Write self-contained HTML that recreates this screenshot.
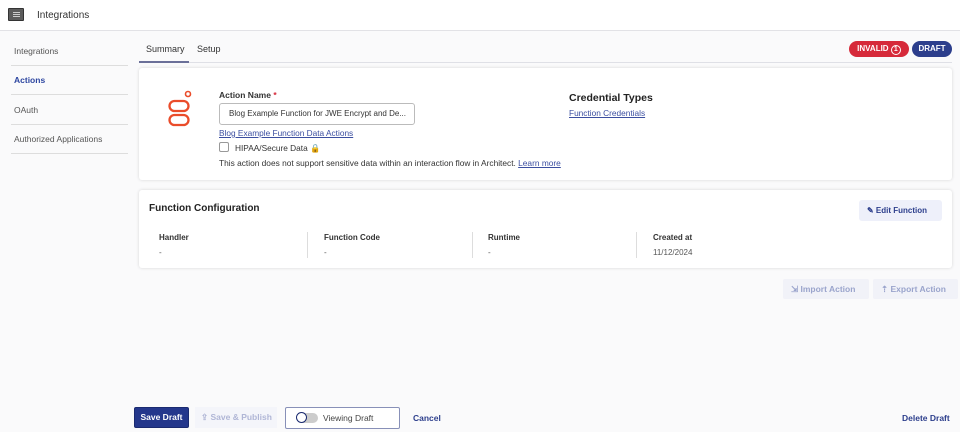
<!DOCTYPE html>
<html><head><style>
*{box-sizing:border-box;margin:0;padding:0}
body{width:960px;height:432px;overflow:hidden;background:#fafafb;font-family:"Liberation Sans",sans-serif;color:#222;position:relative;font-size:9px}
.abs{position:absolute}
.top{left:0;top:0;width:960px;height:31px;background:#fff;border-bottom:1px solid #e2e2e6}
.menu{left:8px;top:8px;width:16px;height:13px;background:#5c5c5c;border:1px solid #333;border-radius:1px}
.menu i{position:absolute;left:4px;width:7px;height:1px;background:#ccc}
.side{left:0;top:31px;width:131px;height:401px;background:#fafafb}
.si{position:absolute;left:14px;font-size:8.5px;color:#555}
.sep{position:absolute;left:11px;width:117px;height:1px;background:#ddd}
.card{background:#fff;border-radius:3px;box-shadow:0 0 3px rgba(0,0,0,.15)}
a{color:#3b4ea0;text-decoration:underline}
.pill{border-radius:8px;height:16px;color:#fff;font-weight:bold;font-size:8px;line-height:16px;text-align:center}
.lbl{font-weight:bold;font-size:8.5px;color:#333}
.val{font-size:8px;color:#555}
.vl{width:1px;height:26px;background:#ddd}
.btn{height:20px;background:#f1f2f8;border-radius:2px;color:#9aa4cc;font-weight:bold;font-size:8.5px;line-height:20px}
</style></head><body>
<div class="abs top"></div>
<div class="abs menu"><i style="top:3px"></i><i style="top:5px"></i><i style="top:7px"></i></div>
<div class="abs" style="left:37px;top:10px;font-size:10px;color:#333">Integrations</div>
<div class="abs side">
<div class="si" style="top:15px">Integrations</div><div class="sep" style="top:34px"></div>
<div class="si" style="top:44px;color:#2c45a0;font-weight:bold">Actions</div><div class="sep" style="top:63px"></div>
<div class="si" style="top:74px">OAuth</div><div class="sep" style="top:93px"></div>
<div class="si" style="top:103px">Authorized Applications</div><div class="sep" style="top:122px"></div>
</div>
<div class="abs" style="left:139px;top:62px;width:813px;height:1px;background:#dfe0e6"></div>
<div class="abs" style="left:139px;top:61px;width:50px;height:2px;background:#6b7099"></div>
<div class="abs" style="left:146px;top:44px;font-size:9px;color:#333">Summary</div>
<div class="abs" style="left:197px;top:44px;font-size:9px;color:#333">Setup</div>
<div class="abs pill" style="left:849px;top:41px;width:60px;background:#d62a3a">INVALID <span style="display:inline-block;width:10px;height:10px;border:1px solid #fff;border-radius:50%;line-height:8px;font-size:7px">1</span></div>
<div class="abs pill" style="left:912px;top:41px;width:40px;background:#2c3e8c">DRAFT</div>

<div class="abs card" style="left:139px;top:68px;width:813px;height:112px"></div>
<svg class="abs" style="left:166px;top:88px" width="30" height="42" viewBox="0 0 30 42">
<rect x="3.5" y="13" width="19" height="10" rx="5" fill="none" stroke="#ea4c2a" stroke-width="2.3"/>
<rect x="3.5" y="27" width="19" height="10" rx="5" fill="none" stroke="#ea4c2a" stroke-width="2.3"/>
<circle cx="22" cy="6" r="2.5" fill="none" stroke="#ea4c2a" stroke-width="1.6"/>
</svg>
<div class="abs lbl" style="left:219px;top:90px">Action Name <span style="color:#d62a3a">*</span></div>
<div class="abs" style="left:219px;top:103px;width:196px;height:22px;border:1px solid #bbb;border-radius:3px;font-size:8px;line-height:20px;padding-left:9px;color:#333">Blog Example Function for JWE Encrypt and De...</div>
<div class="abs" style="left:219px;top:128px;font-size:8.3px"><a>Blog Example Function Data Actions</a></div>
<div class="abs" style="left:219px;top:142px;width:10px;height:10px;border:1px solid #999;border-radius:2px"></div>
<div class="abs" style="left:235px;top:143px;font-size:8.3px;color:#333">HIPAA/Secure Data <span style="color:#9a7a2a">🔒</span></div>
<div class="abs" style="left:219px;top:158px;font-size:8.35px;color:#333">This action does not support sensitive data within an interaction flow in Architect. <a>Learn more</a></div>
<div class="abs" style="left:569px;top:92px;font-weight:bold;font-size:10.5px;color:#222">Credential Types</div>
<div class="abs" style="left:569px;top:108px;font-size:8.3px"><a>Function Credentials</a></div>

<div class="abs card" style="left:139px;top:190px;width:813px;height:78px"></div>
<div class="abs" style="left:149px;top:203px;font-weight:bold;font-size:10px;color:#222">Function Configuration</div>
<div class="abs" style="left:859px;top:200px;width:83px;height:21px;background:#eef0fa;border-radius:3px;color:#2c3e8c;font-weight:bold;font-size:8px;line-height:21px;padding-left:8px">✎ Edit Function</div>
<div class="abs lbl" style="left:159px;top:233px;font-size:8px">Handler</div><div class="abs val" style="left:159px;top:248px">-</div>
<div class="abs vl" style="left:307px;top:232px"></div>
<div class="abs lbl" style="left:324px;top:233px;font-size:8px">Function Code</div><div class="abs val" style="left:324px;top:248px">-</div>
<div class="abs vl" style="left:472px;top:232px"></div>
<div class="abs lbl" style="left:488px;top:233px;font-size:8px">Runtime</div><div class="abs val" style="left:488px;top:248px">-</div>
<div class="abs vl" style="left:636px;top:232px"></div>
<div class="abs lbl" style="left:653px;top:233px;font-size:8px">Created at</div><div class="abs val" style="left:653px;top:248px">11/12/2024</div>

<div class="abs btn" style="left:783px;top:279px;width:86px;padding-left:8px">⇲ Import Action</div>
<div class="abs btn" style="left:873px;top:279px;width:85px;padding-left:8px">⇡ Export Action</div>

<div class="abs" style="left:134px;top:407px;width:55px;height:21px;background:#24378c;border:1px solid #1a2a70;border-radius:2px;color:#fff;font-weight:bold;font-size:8.5px;line-height:19px;text-align:center">Save Draft</div>
<div class="abs" style="left:195px;top:407px;width:82px;height:21px;background:#f4f5fa;color:#b0b6d6;font-weight:bold;font-size:8.5px;line-height:21px;padding-left:6px">⇪ Save &amp; Publish</div>
<div class="abs" style="left:285px;top:407px;width:115px;height:22px;border:1px solid #8890b8;border-radius:2px;background:#fff"></div>
<div class="abs" style="left:297px;top:413px;width:21px;height:10px;background:#ccc;border-radius:5px"></div>
<div class="abs" style="left:296px;top:412px;width:11px;height:11px;border:1.5px solid #1a2a70;border-radius:50%;background:#fff"></div>
<div class="abs" style="left:323px;top:413px;font-size:8.5px;color:#444">Viewing Draft</div>
<div class="abs" style="left:413px;top:413px;font-size:8.5px;color:#2c3e8c;font-weight:bold">Cancel</div>
<div class="abs" style="left:902px;top:413px;font-size:8.5px;color:#2c3e8c;font-weight:bold">Delete Draft</div>
</body></html>
